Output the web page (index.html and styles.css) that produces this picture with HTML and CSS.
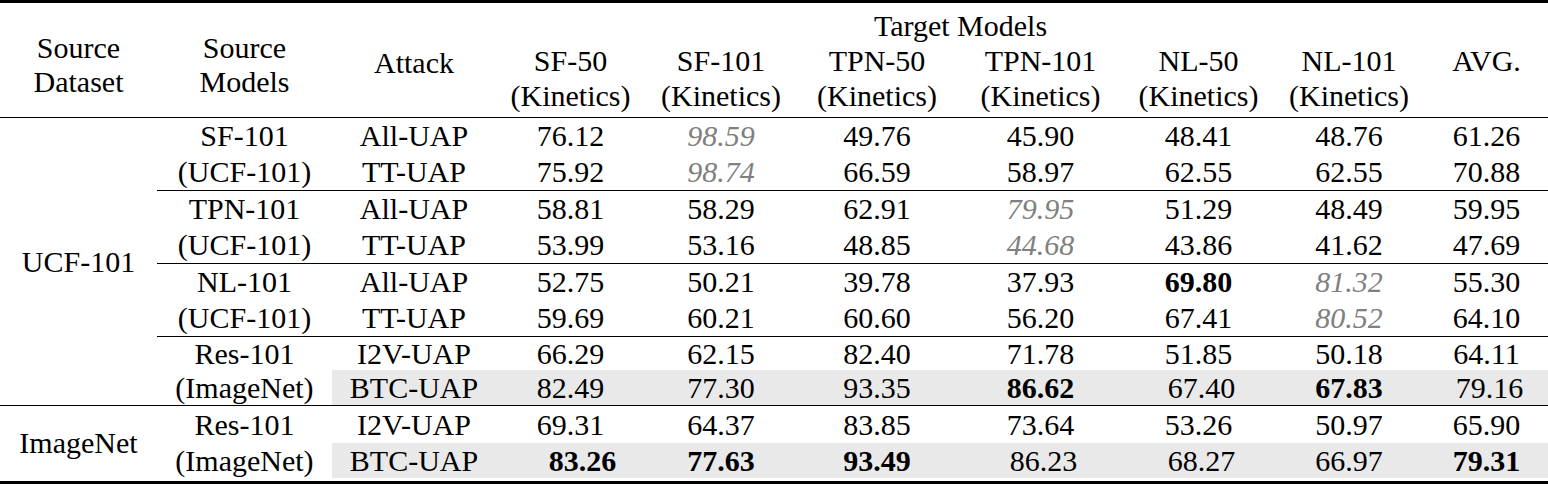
FILE: index.html
```html
<!DOCTYPE html>
<html lang="en">
<head>
<meta charset="utf-8">
<title>Transferability results</title>
<link rel="stylesheet" href="styles.css">
</head>
<body>
<table class="results">
  <colgroup>
    <col class="w-ds"><col class="w-sm"><col class="w-at">
    <col class="w-t1"><col class="w-t2"><col class="w-t3"><col class="w-t4">
    <col class="w-t5"><col class="w-t6"><col class="w-avg">
  </colgroup>
  <thead>
    <tr class="hr1">
      <th rowspan="3" class="hs hs-ds">Source<br>Dataset</th>
      <th rowspan="3" class="hs hs-ds">Source<br>Models</th>
      <th rowspan="3" class="hs hs-at">Attack</th>
      <th colspan="6" class="tm">Target Models</th>
      <th></th>
    </tr>
    <tr class="hr2">
      <th>SF-50</th><th>SF-101</th><th>TPN-50</th><th>TPN-101</th><th>NL-50</th><th>NL-101</th><th>AVG.</th>
    </tr>
    <tr class="hr3">
      <th>(Kinetics)</th><th>(Kinetics)</th><th>(Kinetics)</th><th>(Kinetics)</th><th>(Kinetics)</th><th>(Kinetics)</th><th></th>
    </tr>
  </thead>
  <tbody>
    <tr class="r">
      <td rowspan="8" class="ds">UCF-101</td>
      <td>SF-101</td><td>All-UAP</td>
      <td>76.12</td><td class="self">98.59</td><td>49.76</td><td>45.90</td><td>48.41</td><td>48.76</td><td>61.26</td>
    </tr>
    <tr class="r">
      <td>(UCF-101)</td><td>TT-UAP</td>
      <td>75.92</td><td class="self">98.74</td><td>66.59</td><td>58.97</td><td>62.55</td><td>62.55</td><td>70.88</td>
    </tr>
    <tr class="r grp">
      <td>TPN-101</td><td>All-UAP</td>
      <td>58.81</td><td>58.29</td><td>62.91</td><td class="self">79.95</td><td>51.29</td><td>48.49</td><td>59.95</td>
    </tr>
    <tr class="r">
      <td>(UCF-101)</td><td>TT-UAP</td>
      <td>53.99</td><td>53.16</td><td>48.85</td><td class="self">44.68</td><td>43.86</td><td>41.62</td><td>47.69</td>
    </tr>
    <tr class="r grp">
      <td>NL-101</td><td>All-UAP</td>
      <td>52.75</td><td>50.21</td><td>39.78</td><td>37.93</td><td class="best">69.80</td><td class="self">81.32</td><td>55.30</td>
    </tr>
    <tr class="r">
      <td>(UCF-101)</td><td>TT-UAP</td>
      <td>59.69</td><td>60.21</td><td>60.60</td><td>56.20</td><td>67.41</td><td class="self">80.52</td><td>64.10</td>
    </tr>
    <tr class="r-short grp">
      <td>Res-101</td><td>I2V-UAP</td>
      <td>66.29</td><td>62.15</td><td>82.40</td><td>71.78</td><td>51.85</td><td>50.18</td><td>64.11</td>
    </tr>
    <tr class="r-ours">
      <td>(ImageNet)</td><td class="shade">BTC-UAP</td>
      <td class="shade">82.49</td><td class="shade">77.30</td><td class="shade">93.35</td><td class="shade best">86.62</td><td class="shade nudge">67.40</td><td class="shade best">67.83</td><td class="shade nudge">79.16</td>
    </tr>
    <tr class="r-tall grp full">
      <td rowspan="2" class="ds ds-last">ImageNet</td>
      <td>Res-101</td><td>I2V-UAP</td>
      <td>69.31</td><td>64.37</td><td>83.85</td><td>73.64</td><td>53.26</td><td>50.97</td><td>65.90</td>
    </tr>
    <tr class="r-ours last">
      <td>(ImageNet)</td><td class="shade">BTC-UAP</td>
      <td class="shade best shift">83.26</td><td class="shade best">77.63</td><td class="shade best">93.49</td><td class="shade nudge">86.23</td><td class="shade nudge">68.27</td><td class="shade">66.97</td><td class="shade best">79.31</td>
    </tr>
  </tbody>
</table>
</body>
</html>
```

FILE: styles.css
```css
html, body {
  margin: 0;
  padding: 0;
  background: #ffffff;
  font-family: "Liberation Serif", "Times New Roman", serif;
}

.results {
  width: 1548px;
  table-layout: fixed;
  border-collapse: separate;
  border-spacing: 0;
  font-size: 30px;
  color: #000;
}

.w-ds { width: 157px; }
.w-sm { width: 175px; }
.w-at { width: 164px; }
.w-t1 { width: 149px; }
.w-t2 { width: 152px; }
.w-t3 { width: 160px; }
.w-t4 { width: 167px; }
.w-t5 { width: 149px; }
.w-t6 { width: 152px; }
.w-avg { width: 123px; }

.results th,
.results td {
  padding: 0;
  text-align: center;
  white-space: nowrap;
  font-weight: normal;
}

/* header */
.hr1 th {
  border-top: 3px solid #000;
  height: 43px;
  padding-top: 5px;
  line-height: 35px;
  vertical-align: top;
  box-sizing: border-box;
}
.hr1 th.hs {
  vertical-align: middle;
  line-height: 34px;
  border-bottom: 1px solid #000;
}
.hr1 th.hs-ds { padding-top: 10px; }
.hr1 th.hs-at { padding-top: 6px; }

.hr2 th {
  height: 35px;
  line-height: 35px;
  vertical-align: top;
}
.hr3 th {
  height: 39px;
  line-height: 35px;
  vertical-align: top;
  border-bottom: 1px solid #000;
}

/* body rows */
.r td { line-height: 36px; height: 36px; }
.r-short td { line-height: 33px; height: 33px; }
.r-ours td { line-height: 35px; height: 35px; }
.r-tall td { line-height: 37px; height: 37px; }

.grp td { border-top: 1px solid #000; }
.grp td.ds { border-top: 0; }
.full td.ds { border-top: 1px solid #000; }

.results td.ds { vertical-align: middle; }
.results td.ds-last {
  border-bottom: 3px solid #000;
  padding-bottom: 3px;
}

.shade { background: #e9e9e9; }
.results td.nudge { padding-left: 6px; }
.results td.shift { padding-left: 24px; }

.last td {
  padding-bottom: 3px;
  border-bottom: 3px solid #000;
  background-clip: content-box;
}
.results .last td.nudge,
.results .last td.shift {
  background-clip: border-box;
  background: linear-gradient(#e9e9e9, #e9e9e9) no-repeat top left / 100% 35px;
}

.results td.self {
  color: #808080;
  font-style: italic;
}
.results td.best { font-weight: bold; }
```
